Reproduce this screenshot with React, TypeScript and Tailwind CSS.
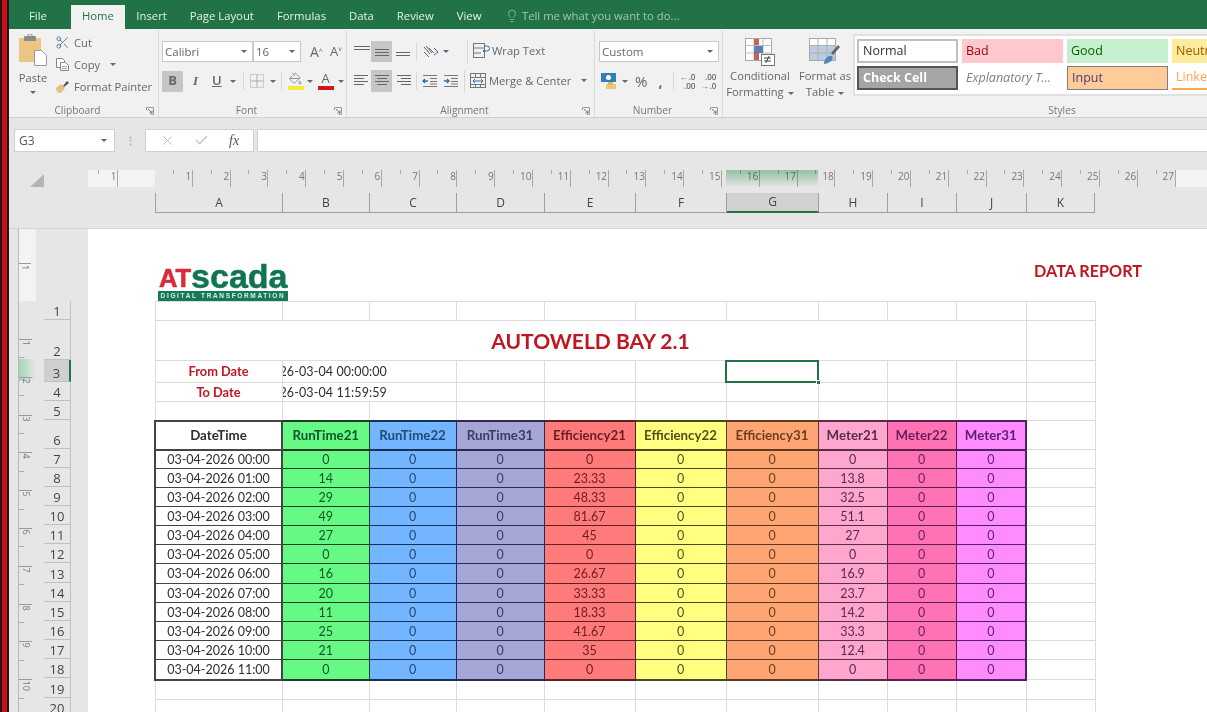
import { Lightbulb, PaintBucket, Scissors, X, Check } from 'lucide-react';
import type { ReactNode } from 'react';

const tabs = ['File', 'Home', 'Insert', 'Page Layout', 'Formulas', 'Data', 'Review', 'View'];
const colWidths = 'grid-cols-[128px_87px_87px_88px_91px_91px_92px_69px_69px_70px_68px]';
const letters = ['A', 'B', 'C', 'D', 'E', 'F', 'G', 'H', 'I', 'J', 'K'];
const colClasses = ['w-[127px]', 'w-[87px]', 'w-[87px]', 'w-[88px]', 'w-[91px]', 'w-[91px]', 'w-[92px]', 'w-[69px]', 'w-[69px]', 'w-[70px]', 'w-[69px]'];
const rowHeights = ['h-[19px]', 'h-[40px]', 'h-[22px]', 'h-[19px]', 'h-[19px]', 'h-[29px]', 'h-[19px]', 'h-[19px]', 'h-[19px]', 'h-[19px]', 'h-[19px]', 'h-[19px]', 'h-[20px]', 'h-[19px]', 'h-[19px]', 'h-[19px]', 'h-[19px]', 'h-[19px]', 'h-[20px]', 'h-[19px]'];

const columns = [
  { name: 'RunTime21', cell: 'bg-[#66fa85] text-[#14532d] border-[#1d3d27]' },
  { name: 'RunTime22', cell: 'bg-[#74b5ff] text-[#1e4a73] border-[#14305c]' },
  { name: 'RunTime31', cell: 'bg-[#a6a6d6] text-[#3b3b66] border-[#2a2a55]' },
  { name: 'Efficiency21', cell: 'bg-[#ff7a7a] text-[#6b1e1e] border-[#5c2020]' },
  { name: 'Efficiency22', cell: 'bg-[#ffff80] text-[#4f4f1a] border-[#4a4a20]' },
  { name: 'Efficiency31', cell: 'bg-[#ffa573] text-[#6b3f1e] border-[#5c3a20]' },
  { name: 'Meter21', cell: 'bg-[#ffa6cf] text-[#5b2a4b] border-[#5c2a4b]' },
  { name: 'Meter22', cell: 'bg-[#ff73b5] text-[#6b1e55] border-[#5c2050]' },
  { name: 'Meter31', cell: 'bg-[#ff8cff] text-[#5a1f70] border-[#502068]' },
];

const data: [string, string, string, string][] = [
  ['00:00', '0', '0', '0'],
  ['01:00', '14', '23.33', '13.8'],
  ['02:00', '29', '48.33', '32.5'],
  ['03:00', '49', '81.67', '51.1'],
  ['04:00', '27', '45', '27'],
  ['05:00', '0', '0', '0'],
  ['06:00', '16', '26.67', '16.9'],
  ['07:00', '20', '33.33', '23.7'],
  ['08:00', '11', '18.33', '14.2'],
  ['09:00', '25', '41.67', '33.3'],
  ['10:00', '21', '35', '12.4'],
  ['11:00', '0', '0', '0'],
];

const grid = 'border border-[#dcdcdc]';

function Caret({ className = '' }: { className?: string }) {
  return <span className={`inline-block h-0 w-0 border-x-[3px] border-t-[3px] border-x-transparent border-t-[#666] ${className}`} />;
}

function Launcher() {
  return (
    <svg width="8" height="8" viewBox="0 0 8 8" className="shrink-0">
      <path d="M.5 3V.5H7.500V7.500H5" fill="none" stroke="#999" />
      <path d="M2 2l4 4M6 3.500V6H3.500" fill="none" stroke="#777" />
    </svg>
  );
}

function Lines({ rows, offset = 0 }: { rows: [number, number][]; offset?: number }) {
  return (
    <svg width="16" height="14" viewBox="0 0 16 14">
      {rows.map(([x, w], i) => (
        <rect key={i} x={x} y={offset + i * 3} width={w} height="1" fill="#666" />
      ))}
    </svg>
  );
}

function Group({ label, width, children }: { label: string; width: string; children: ReactNode }) {
  return (
    <div className={`flex shrink-0 flex-col border-r border-[#dcdcdc] ${width}`}>
      <div className="h-[75px]">{children}</div>
      <div className="flex h-[11px] items-center pr-[4px]">
        <span className="flex-1 text-center text-[10.200px] leading-[11px] text-[#777]">{label}</span>
        <Launcher />
      </div>
    </div>
  );
}

function Combo({ text, width }: { text: string; width: string }) {
  return (
    <div className={`flex h-[21px] items-center justify-between border border-[#c8c8c8] bg-white pl-[2px] pr-[5px] text-[11.500px] text-[#666] ${width}`}>
      {text}
      <Caret />
    </div>
  );
}

function PasteIcon() {
  return (
    <svg width="30" height="32" viewBox="0 0 30 32" className="shrink-0">
      <rect x="1" y="4" width="22" height="24" rx="1" fill="#eac583" />
      <rect x="6" y="2" width="12" height="5" rx="1" fill="#8a8a8a" />
      <rect x="10" y="0" width="4" height="4" rx="1" fill="none" stroke="#8a8a8a" />
      <path d="M16.500 16.500h7l5 5v10h-12z" fill="#fff" stroke="#9a9a9a" />
    </svg>
  );
}

function CopyIcon() {
  return (
    <svg width="15" height="15" viewBox="0 0 15 15" fill="#fff" stroke="#7b8a99">
      <path d="M1.500 1.500h6l2 2v7h-8z" />
      <path d="M5.500 5.500h5l3 3v5h-8z" />
      <path d="M7 9.500h5M7 11.500h5" stroke="#9aa8b4" />
    </svg>
  );
}

function BrushIcon() {
  return (
    <svg width="15" height="15" viewBox="0 0 15 15">
      <path d="M1 9l5-4 4 4-4 5H4l1-2-2 2-1-1 1-2-2 1z" fill="#e6c07c" />
      <path d="M8 7l4-5 2 2-5 4z" fill="#555" />
    </svg>
  );
}

function BordersIcon() {
  return (
    <svg width="14" height="14" viewBox="0 0 14 14" fill="none" stroke="#a8a8a8" strokeDasharray="1 1">
      <rect x=".5" y=".5" width="13" height="13" />
      <path d="M7 1v12M1 7h12" strokeDasharray="none" stroke="#aaa" />
    </svg>
  );
}

function OrientIcon() {
  return (
    <svg width="18" height="14" viewBox="0 0 18 14" fill="none" stroke="#666">
      <path d="M2 2l6 7M4 1l6 7M7 3l5 5M2 7l5 5" />
      <path d="M12 3l4 4-4 3" stroke="#2f6ea5" />
    </svg>
  );
}

function WrapIcon() {
  return (
    <svg width="17" height="16" viewBox="0 0 17 16" fill="none" stroke="#777">
      <rect x=".5" y=".5" width="11" height="14" />
      <path d="M1 5h10M1 10h7" />
      <path d="M11 3h3a2 2 0 0 1 0 5h-4m2-2l-2 2 2 2" stroke="#2f6ea5" />
    </svg>
  );
}

function MergeIcon() {
  return (
    <svg width="17" height="16" viewBox="0 0 17 16" fill="none" stroke="#777">
      <rect x=".5" y=".5" width="15" height="14" />
      <path d="M1 4.500h14M1 11.500h14M5.500 1v3M10.500 1v3M5.500 12v3M10.500 12v3" />
      <path d="M3 8h10M5 6L3 8l2 2M11 6l2 2-2 2" stroke="#2f6ea5" />
    </svg>
  );
}

function IndentIcon({ flip = false }: { flip?: boolean }) {
  return (
    <svg width="16" height="14" viewBox="0 0 16 14" fill="none">
      <path d="M1 1.500h14M1 12.500h14M8 4.500h7M8 7.500h7M8 10h7" stroke="#777" />
      <path d={flip ? 'M1 7h5M4 5l2 2-2 2' : 'M1 7h5M3 5L1 7l2 2'} stroke="#2f6ea5" strokeWidth="1.300" />
    </svg>
  );
}

function AccountingIcon() {
  return (
    <svg width="16" height="17" viewBox="0 0 16 17">
      <rect x="0" y="0" width="15" height="9" fill="#2f7fb8" />
      <circle cx="7.500" cy="4.500" r="2.500" fill="#fff" />
      <rect x="5" y="11" width="10" height="5" fill="#e8cb7a" />
      <rect x="7" y="9" width="5" height="3" fill="#d8b860" />
    </svg>
  );
}

function DecimalIcon({ top, bottom, flip = false }: { top: string; bottom: string; flip?: boolean }) {
  return (
    <div className="flex w-[15px] flex-col text-[8px] font-semibold leading-[9px] text-[#666]">
      <span className="flex items-center justify-end gap-[1px]">{!flip && <span className="text-[#2f6ea5]">←</span>}{top}</span>
      <span className="flex items-center justify-end gap-[1px]">{flip && <span className="text-[#2f6ea5]">→</span>}{bottom}</span>
    </div>
  );
}

function CondIcon() {
  return (
    <svg width="30" height="28" viewBox="0 0 30 28" className="shrink-0">
      <rect x=".5" y=".5" width="26" height="22" fill="#fff" stroke="#a8a8a8" />
      <path d="M.5 7.500h26M.5 15h26M9 .5v22M18 .5v22" stroke="#bdbdbd" />
      <rect x="9" y="1" width="5" height="6" fill="#c0664f" />
      <rect x="9" y="8" width="9" height="7" fill="#5c7fb8" />
      <rect x="9" y="15" width="5" height="7" fill="#c0664f" />
      <rect x="16.500" y="16.500" width="13" height="11" fill="#fff" stroke="#777" />
      <path d="M19 20h7M19 23h7M24 18l-3 7" stroke="#444" fill="none" />
    </svg>
  );
}

function TableIcon() {
  return (
    <svg width="32" height="28" viewBox="0 0 32 28" className="shrink-0">
      <rect x=".5" y=".5" width="26" height="22" fill="#fff" stroke="#a8a8a8" />
      <rect x="1" y="7" width="25" height="15" fill="#bcccdc" />
      <path d="M.5 7.500h26M.5 15h26M9 .5v22M18 .5v22" stroke="#a8b0b8" />
      <path d="M22 15l7-8 2 2-7 8z" fill="#666" />
      <path d="M15 26c0-6 5-9 8-8 2 2 0 7-8 8z" fill="#4f87b8" />
    </svg>
  );
}

function StyleCell({ children, className }: { children: ReactNode; className: string }) {
  return <div className={`flex h-[24px] w-[101px] shrink-0 items-center overflow-hidden whitespace-nowrap px-[4px] text-[12.500px] ${className}`}>{children}</div>;
}

function Ribbon() {
  return (
    <div className="flex h-[89px] shrink-0 border-b border-[#d0d0d0] bg-[#f1f1f1] pt-[1px] text-[11.200px]">
      <Group label="Clipboard" width="w-[150px]">
        <div className="flex pl-[8px] pt-[4px]">
          <div className="flex w-[32px] flex-col items-center leading-[14px] text-[#666]">
            <PasteIcon />
            <span className="mt-[5px]">Paste</span>
            <Caret className="mt-[6px]" />
          </div>
          <div className="ml-[6px] flex flex-col gap-[5px] leading-[17px] text-[#666]">
            <div className="flex items-center gap-[4px]"><Scissors size={15} strokeWidth={1.400} className="text-[#53708c]" />Cut</div>
            <div className="flex items-center gap-[4px]"><CopyIcon />Copy<Caret className="ml-[6px]" /></div>
            <div className="flex items-center gap-[4px]"><BrushIcon />Format Painter</div>
          </div>
        </div>
      </Group>

      <Group label="Font" width="w-[188px]">
        <div className="pl-[3px] pt-[11px]">
          <div className="flex items-center">
            <Combo text="Calibri" width="w-[91px]" />
            <Combo text="16" width="w-[48px]" />
            <span className="ml-[9px] text-[14px] text-[#666]">A<sup className="text-[7px]">^</sup></span>
            <span className="ml-[7px] text-[13px] text-[#666]">A<sup className="text-[7px]">˅</sup></span>
          </div>
          <div className="mt-[8px] flex h-[22px] items-center text-[13px] text-[#666]">
            <span className="flex h-[21px] w-[21px] items-center justify-center bg-[#c6c6c6] font-bold">B</span>
            <span className="ml-[10px] font-['Liberation_Serif',serif] font-bold italic">I</span>
            <span className="ml-[14px] font-semibold underline">U</span>
            <Caret className="ml-[8px]" />
            <span className="ml-[7px] h-[18px] w-px bg-[#d8d8d8]" />
            <span className="ml-[6px]"><BordersIcon /></span>
            <Caret className="ml-[6px]" />
            <span className="ml-[5px] h-[18px] w-px bg-[#d8d8d8]" />
            <div className="ml-[6px] flex w-[16px] flex-col items-center">
              <PaintBucket size={13} strokeWidth={1.400} className="text-[#777]" />
              <span className="mt-[1px] h-[4px] w-[16px] bg-[#f5e935]" />
            </div>
            <Caret className="ml-[3px]" />
            <div className="ml-[5px] flex w-[16px] flex-col items-center text-[13px] font-medium leading-[13px]">
              A
              <span className="mt-[1px] h-[4px] w-[16px] bg-[#d01818]" />
            </div>
            <Caret className="ml-[4px]" />
          </div>
        </div>
      </Group>

      <Group label="Alignment" width="w-[248px]">
        <div className="pl-[6px] pt-[11px]">
          <div className="flex h-[21px] items-center">
            <span className="flex w-[18px] justify-center"><Lines rows={[[0, 16], [0, 16]]} offset={1} /></span>
            <span className="flex h-[21px] w-[21px] items-center justify-center bg-[#c6c6c6]"><Lines rows={[[1, 14], [1, 14], [1, 14]]} offset={4} /></span>
            <span className="flex w-[21px] justify-center"><Lines rows={[[1, 14], [1, 14]]} offset={7} /></span>
            <span className="ml-[3px] h-[18px] w-px bg-[#d8d8d8]" />
            <span className="ml-[5px]"><OrientIcon /></span>
            <Caret className="ml-[3px]" />
            <span className="ml-[18px] h-[22px] w-px bg-[#d8d8d8]" />
            <span className="ml-[5px] flex items-center gap-[2px] text-[#666]"><WrapIcon />Wrap Text</span>
          </div>
          <div className="mt-[8px] flex h-[22px] items-center">
            <span className="flex w-[18px] justify-center"><Lines rows={[[0, 14], [0, 10], [0, 14], [0, 10]]} offset={1} /></span>
            <span className="flex h-[22px] w-[21px] items-center justify-center bg-[#c6c6c6]"><Lines rows={[[1, 14], [3, 10], [1, 14], [3, 10]]} offset={1} /></span>
            <span className="flex w-[21px] justify-center"><Lines rows={[[2, 14], [6, 10], [2, 14], [6, 10]]} offset={1} /></span>
            <span className="ml-[3px] h-[18px] w-px bg-[#d8d8d8]" />
            <span className="ml-[5px]"><IndentIcon /></span>
            <span className="ml-[5px]"><IndentIcon flip /></span>
            <span className="ml-[5px] h-[22px] w-px bg-[#d8d8d8]" />
            <span className="ml-[5px] flex items-center gap-[2px] text-[#666]"><MergeIcon />Merge &amp; Center<Caret className="ml-[8px]" /></span>
          </div>
        </div>
      </Group>

      <Group label="Number" width="w-[128px]">
        <div className="pl-[4px] pt-[11px]">
          <Combo text="Custom" width="w-[120px]" />
          <div className="mt-[9px] flex h-[20px] items-center text-[#666]">
            <span className="ml-[2px]"><AccountingIcon /></span>
            <Caret className="ml-[5px]" />
            <span className="ml-[7px] text-[15px]">%</span>
            <span className="ml-[11px] text-[14px] font-bold">,</span>
            <span className="ml-[11px] h-[18px] w-px bg-[#d8d8d8]" />
            <span className="ml-[6px]"><DecimalIcon top=".0" bottom=".00" /></span>
            <span className="ml-[6px]"><DecimalIcon top=".00" bottom=".0" flip /></span>
          </div>
        </div>
      </Group>

      <div className="flex min-w-0 flex-1 flex-col">
        <div className="flex h-[75px]">
          <div className="flex w-[74px] shrink-0 flex-col items-center whitespace-nowrap pt-[8px] leading-[16px] text-[#666]">
            <CondIcon />
            <span className="mt-[2px]">Conditional</span>
            <span>Formatting<Caret className="ml-[4px] align-middle" /></span>
          </div>
          <div className="flex w-[56px] shrink-0 flex-col items-center whitespace-nowrap pt-[8px] leading-[16px] text-[#666]">
            <TableIcon />
            <span className="mt-[2px]">Format as</span>
            <span>Table<Caret className="ml-[4px] align-middle" /></span>
          </div>
          <div className="mt-[4px] h-[62px] flex-1 overflow-hidden border-y-2 border-l-2 border-[#e0e0e0] bg-white pl-[2px] pt-[3px]">
            <div className="flex gap-[4px]">
              <StyleCell className="border-2 border-[#c0c0c0] text-[#333]">Normal</StyleCell>
              <StyleCell className="bg-[#ffc7ce] text-[#9c0006]">Bad</StyleCell>
              <StyleCell className="bg-[#c6efce] text-[#006100]">Good</StyleCell>
              <StyleCell className="bg-[#ffeb9c] text-[#9c5700]">Neutral</StyleCell>
            </div>
            <div className="mt-[3px] flex gap-[4px]">
              <StyleCell className="border-2 border-[#555] bg-[#a5a5a5] font-bold text-white">Check Cell</StyleCell>
              <StyleCell className="italic text-[#7f7f7f]">Explanatory T...</StyleCell>
              <StyleCell className="border border-[#7f7f7f] bg-[#ffcc99] text-[#3f3f76]">Input</StyleCell>
              <StyleCell className="border-b-2 border-[#ff8001] text-[#fa7d00] opacity-70">Linked Cell</StyleCell>
            </div>
          </div>
        </div>
        <div className="flex h-[11px] items-center justify-center pl-[194px] text-[10.200px] leading-[11px] text-[#777]">Styles</div>
      </div>
    </div>
  );
}

function FormulaBar() {
  return (
    <div className="flex h-[34px] shrink-0 items-end bg-[#e6e6e6]">
      <div className="ml-[5px] flex h-[23px] w-[101px] items-center justify-between border border-[#d0d0d0] bg-white pl-[4px] pr-[7px] text-[12px] text-[#555]">
        G3
        <Caret />
      </div>
      <div className="flex h-[23px] w-[30px] items-center justify-center text-[11px] font-bold leading-[4px] text-[#aaa]">⋮</div>
      <div className="flex h-[23px] w-[109px] items-center justify-around border border-[#d0d0d0] bg-white px-[4px]">
        <X size={15} strokeWidth={1.500} className="text-[#bbb]" />
        <Check size={15} strokeWidth={2} className="text-[#bbb]" />
        <span className="font-['Liberation_Serif',serif] text-[14px] italic text-[#555]">fx</span>
      </div>
      <div className="ml-[3px] h-[23px] flex-1 border-y border-l border-[#d0d0d0] bg-white" />
    </div>
  );
}

function RulerCell({ n }: { n: number }) {
  return (
    <div className="flex h-[17px] w-[37.800px] shrink-0 justify-end border-r border-[#a8a8a8] bg-[linear-gradient(#aaa,#aaa)] bg-[length:1px_4px] bg-[position:50%_0] bg-no-repeat pr-[0.500px] text-[10px] leading-[13px] text-[#777]">
      {n}
    </div>
  );
}

function SheetHead() {
  return (
    <div className="h-[77px] shrink-0 border-b border-[#d4d4d4] bg-[#e6e6e6]">
      <div className="flex pt-[18px]">
        <div className="flex w-[79px] shrink-0 justify-end pr-[44px] pt-[4px]">
          <span className="h-0 w-0 border-b-[13px] border-l-[14px] border-b-[#b4b4b4] border-l-transparent" />
        </div>
        <div className="relative flex h-[17px] flex-1 overflow-hidden">
          <div className="flex w-[67px] shrink-0 justify-end overflow-hidden bg-[#f3f3f3] pr-[37px]">
            <RulerCell n={1} />
          </div>
          {Array.from({ length: 27 }, (_, i) => <RulerCell key={i} n={i + 1} />)}
          <div className="flex-1 bg-[#f3f3f3]" />
          <div className="absolute left-[638px] top-0 h-[17px] w-[92px] bg-gradient-to-b from-[#a0d6b4] to-transparent mix-blend-multiply" />
        </div>
      </div>
      <div className="mt-[6px] flex">
        <div className="w-[146px] shrink-0" />
        <div className={`grid h-[20px] border-b border-[#a0a0a0] ${colWidths}`}>
          {letters.map(l => (
            <div
              key={l}
              className={`flex items-center justify-center border-r text-[12px] text-[#444] first:border-l first:border-l-[#a0a0a0] ${
                l === 'G' ? '-mb-px border-b-2 border-r-[#a0a0a0] border-b-[#217346] bg-[#d2d2d2]' : 'border-[#a0a0a0]'
              }`}
            >
              {l}
            </div>
          ))}
        </div>
      </div>
    </div>
  );
}

function SideRuler() {
  return (
    <div className="ml-[9px] h-full w-[18px] shrink-0 border-l border-[#b8b8b8]">
      <div className="flex h-[72px] flex-col bg-[#f3f3f3] pt-[34px]">
        <span className="w-[12px] border-t border-[#999] pl-[3px]">
          <span className="block w-[7px] rotate-90 text-[9px] leading-[9px] text-[#777]">1</span>
        </span>
      </div>
      <div className="relative">
        <div className="absolute left-0 top-[58px] h-[22px] w-full bg-gradient-to-r from-[#a0d6b4] to-[#e6e6e6]" />
        <div className="h-[38px]" />
        {Array.from({ length: 10 }, (_, i) => (
          <div key={i} className="relative h-[37.800px] bg-[linear-gradient(#aaa,#aaa)] bg-[length:5px_1px] bg-[position:0_50%] bg-no-repeat">
            <div className="w-[13px] border-t border-[#999] pl-[3px]">
              <span className="block w-[8px] rotate-90 whitespace-nowrap text-[9px] leading-[9px] text-[#777]">{i + 1}</span>
            </div>
          </div>
        ))}
      </div>
    </div>
  );
}

function RowHeads() {
  return (
    <div className="ml-[8px] w-[27px] shrink-0 pt-[72px]">
      {rowHeights.map((h, i) => (
        <div
          key={i}
          className={`flex items-end justify-center border-b border-r border-[#c0c0c0] text-[13px] leading-[16px] text-[#444] ${h} ${
            i === 2 ? 'border-r-2 border-r-[#217346] bg-[#cfcfcf]' : ''
          }`}
        >
          {i + 1}
        </div>
      ))}
    </div>
  );
}

function BlankCells({ from, to }: { from: number; to: number }) {
  return <>{letters.slice(from, to).map(l => <td key={l} className={grid} />)}</>;
}

function Sheet() {
  return (
    <table className="table-fixed border-collapse text-center font-['Lato',sans-serif] text-[12.500px] leading-[15px] text-[#2e2e2e]">
      <colgroup>
        {colClasses.map((c, i) => <col key={i} className={c} />)}
      </colgroup>
      <tbody>
        <tr className="h-[19px]"><BlankCells from={0} to={11} /></tr>
        <tr className="h-[40px]">
          <td colSpan={10} className={`${grid} text-[21px] font-bold leading-[26px] text-[#c01622]`}>AUTOWELD BAY 2.1</td>
          <td className={grid} />
        </tr>
        <tr className="h-[22px]">
          <td className={`${grid} text-[12.800px] font-bold text-[#c01622]`}>From Date</td>
          <td colSpan={2} className={`${grid} overflow-hidden text-left`}><div className="-ml-[3px] whitespace-nowrap tracking-[0.100px]">26-03-04 00:00:00</div></td>
          <BlankCells from={3} to={6} />
          <td className={`${grid} relative`}>
            <div className="absolute -bottom-px -left-[2px] -right-px -top-px border-2 border-[#217346]" />
            <div className="absolute -bottom-[3px] -right-[3px] h-[5px] w-[5px] border border-white bg-[#217346]" />
          </td>
          <BlankCells from={7} to={11} />
        </tr>
        <tr className="h-[19px]">
          <td className={`${grid} text-[12.800px] font-bold text-[#c01622]`}>To Date</td>
          <td colSpan={2} className={`${grid} overflow-hidden text-left`}><div className="-ml-[3px] whitespace-nowrap tracking-[0.100px]">26-03-04 11:59:59</div></td>
          <BlankCells from={3} to={11} />
        </tr>
        <tr className="h-[19px]"><BlankCells from={0} to={11} /></tr>
        <tr className="h-[29px] text-[13.300px] font-bold">
          <td className="border-2 border-[#444] bg-white">DateTime</td>
          {columns.map((c, j) => <td key={c.name} className={`border-x border-y-2 ${j === 8 ? 'border-r-2' : ''} ${c.cell}`}>{c.name}</td>)}
          <td className={grid} />
        </tr>
        {data.map(([t, run, eff, met], i) => {
          const vals = [run, '0', '0', eff, '0', '0', met, '0', '0'];
          return (
            <tr key={t} className={i === 6 || i === 11 ? 'h-[20px]' : 'h-[19px]'}>
              <td className={`border-x-2 border-[#444] ${i === 11 ? 'border-b-2' : 'border-b'}`}>{`03-04-2026 ${t}`}</td>
              {columns.map((c, j) => (
                <td key={c.name} className={`border-x ${i === 11 ? 'border-b-2' : 'border-b'} ${j === 8 ? 'border-r-2' : ''} ${c.cell}`}>{vals[j]}</td>
              ))}
              <td className={grid} />
            </tr>
          );
        })}
        <tr className="h-[20px]"><BlankCells from={0} to={11} /></tr>
        <tr className="h-[19px]"><BlankCells from={0} to={11} /></tr>
      </tbody>
    </table>
  );
}

function Logo() {
  return (
    <div className="ml-[4px] w-[130px] font-['Liberation_Sans',sans-serif] font-bold">
      <div className="flex h-[28px] items-end pl-[1px] leading-none">
        <span className="text-[25.500px] leading-[24px] text-[#d92b3a] [-webkit-text-stroke:0.6px_#d92b3a]">AT</span>
        <span className="text-[34px] leading-[27px] text-[#0f7550] [-webkit-text-stroke:0.5px_#0f7550]">scada</span>
      </div>
      <div className="mt-[1px] flex h-[10px] items-center justify-center whitespace-nowrap bg-[#157a55] text-[6.500px] leading-none tracking-[1.650px] text-[#d8f0e4]">
        DIGITAL TRANSFORMATION
      </div>
    </div>
  );
}

export default function App() {
  return (
    <div className="flex h-[712px] w-[1207px] overflow-hidden bg-white font-['Open_Sans',sans-serif]">
      <div className="flex w-[9px] shrink-0">
        <div className="w-[2px] bg-[#2a1214]" />
        <div className="w-[5px] bg-[#c8101a]" />
        <div className="w-[2px] bg-[#1a1a1a]" />
      </div>
      <div className="flex min-w-0 flex-1 flex-col">
        <div className="flex h-[29px] shrink-0 items-end bg-[#217346] pl-[9px] text-[11.300px] text-[#e6f0ea]">
          {tabs.map(t => (
            <div
              key={t}
              className={`flex h-[24px] items-center pb-[2px] ${
                t === 'Home' ? 'bg-[#f1f1f1] px-[11px] text-[#217346]' : t === 'File' ? 'pl-[11px] pr-[24px]' : 'px-[11.500px]'
              }`}
            >
              {t}
            </div>
          ))}
          <div className="ml-[12px] flex h-[24px] items-center gap-[3px] pb-[2px] text-[#9fc8b0]">
            <Lightbulb size={14} strokeWidth={1.300} />
            Tell me what you want to do...
          </div>
        </div>
        <Ribbon />
        <FormulaBar />
        <SheetHead />
        <div className="flex min-h-0 flex-1 overflow-hidden">
          <div className="flex w-[79px] shrink-0 bg-[#e6e6e6]">
            <SideRuler />
            <RowHeads />
          </div>
          <div className="min-w-0 flex-1 pl-[66px]">
            <div className="flex h-[72px] w-[988px] items-end justify-between">
              <Logo />
              <span className="mb-[18px] font-['Lato',sans-serif] text-[16.200px] font-bold text-[#c01622]">DATA REPORT</span>
            </div>
            <Sheet />
          </div>
        </div>
      </div>
    </div>
  );
}
